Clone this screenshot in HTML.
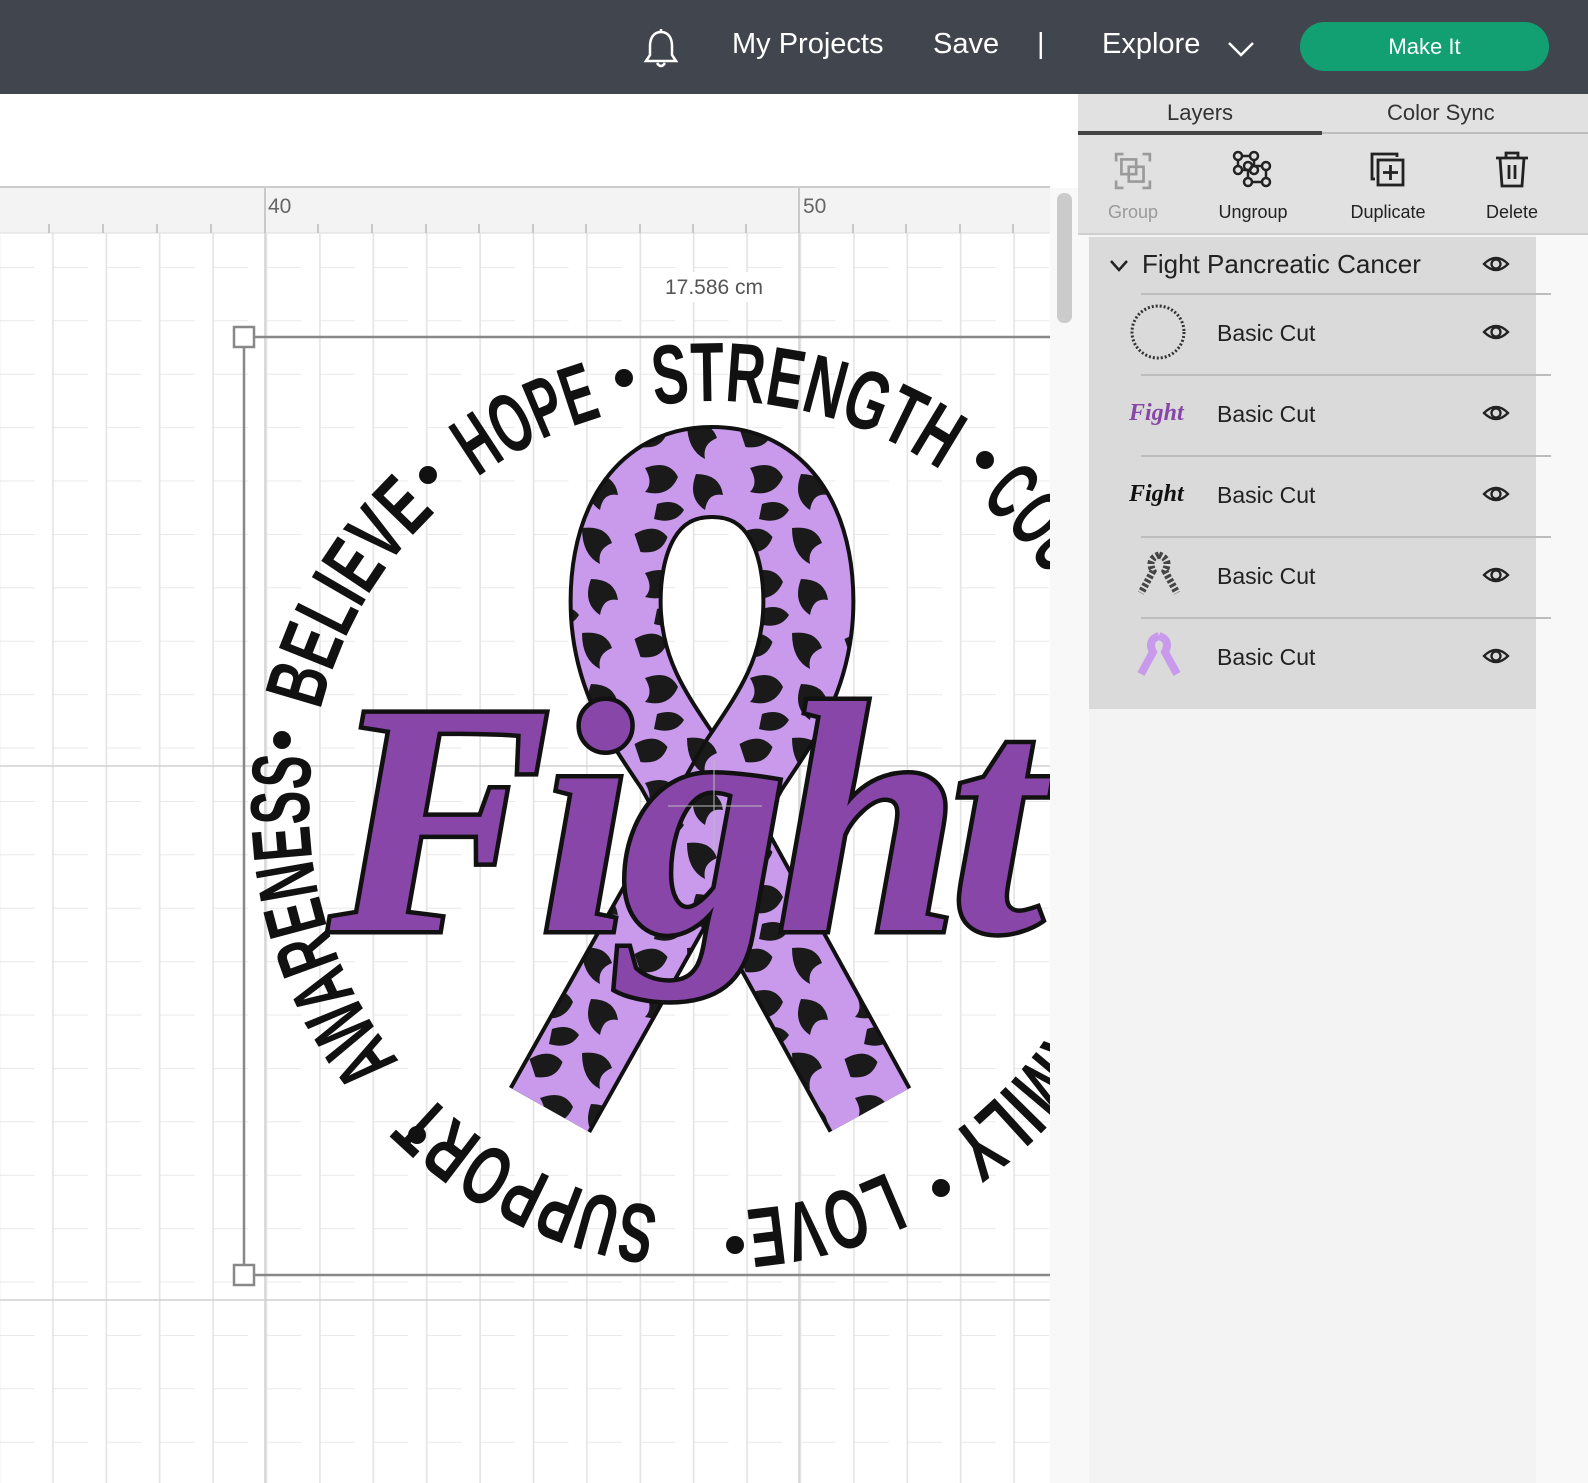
<!DOCTYPE html>
<html><head><meta charset="utf-8"><style>
*{margin:0;padding:0;box-sizing:border-box}
body{width:1588px;height:1483px;overflow:hidden;font-family:"Liberation Sans",sans-serif;background:#fff;position:relative}
.top{position:absolute;left:0;top:0;width:1588px;height:94px;background:#41464e;color:#fff}
.top span{position:absolute;top:28px;font-size:29px}
.btn{position:absolute;left:1300px;top:22px;width:249px;height:49px;border-radius:25px;background:#12a073;color:#fff;font-size:22px;text-align:center;line-height:49px}
.panel{position:absolute;left:1078px;top:94px;width:510px;height:1389px;background:#f8f8f8}
.tabs{position:absolute;left:0;top:0;width:510px;height:141px;background:#e1e1e1;border-bottom:2px solid #cfcfcf}
.tab{position:absolute;top:6px;font-size:22px;color:#333}
.tool{position:absolute;top:108px;font-size:18px;color:#222;text-align:center;width:120px}
.list{position:absolute;left:11px;top:143px;width:447px;height:472px;background:#dadada}
.rowl{position:absolute;left:52px;width:410px;border-top:2px solid #bdbdbd}
.lbl{position:absolute;left:128px;font-size:23px;color:#222}
</style></head><body>
<div class="top">
<svg style="position:absolute;left:643px;top:28px" width="36" height="42" viewBox="0 0 36 42"><path d="M18 4 C10 4 7 11 7 18 L7 27 L3 33 L33 33 L29 27 L29 18 C29 11 26 4 18 4 Z M18 1 L18 4 M14 35 Q18 41 22 35" fill="none" stroke="#fff" stroke-width="2.5"/></svg>
<span style="left:732px">My Projects</span>
<span style="left:933px">Save</span>
<span style="left:1037px">|</span>
<span style="left:1102px">Explore</span>
<svg style="position:absolute;left:1227px;top:40px" width="28" height="18"><path d="M2 3 L14 15 L26 3" fill="none" stroke="#fff" stroke-width="2.5"/></svg>
<div class="btn">Make It</div>
</div>

<svg style="position:absolute;left:0;top:94px" width="1050" height="1389">
<defs>
<pattern id="g" x="-19" y="-94" width="53.4" height="53.4" patternUnits="userSpaceOnUse"><path d="M0 0 H53.4 M0 0 V53.4" stroke="#e2e2e2" stroke-width="1.5" fill="none" transform="translate(18.5,0)"/></pattern>
<pattern id="leo" width="70" height="70" patternUnits="userSpaceOnUse" patternTransform="scale(1.5)">
<rect width="70" height="70" fill="#c99aec"/>
<path d="M3 6 q14 -8 22 2 q-4 12 -18 10 z" fill="#1a1a1a"/>
<path d="M38 2 q16 -2 20 10 q-10 4 -8 14 q-12 -6 -12 -24z" fill="#1a1a1a"/>
<path d="M10 32 q16 -6 22 6 q-6 14 -22 10 q6 -6 0 -16z" fill="#1a1a1a"/>
<path d="M44 36 q16 0 18 14 q-10 -2 -12 10 q-12 -8 -6 -24z" fill="#1a1a1a"/>
<path d="M18 56 q12 -4 18 4 q-6 10 -20 6z" fill="#1a1a1a"/>
</pattern>
<path id="c" d="M408.3,1071.7 A405,405 0 0 1 1019.7,540.3 A405,405 0 0 1 408.3,1071.7"/>
</defs>
<rect width="1050" height="1389" fill="#fff"/>
<rect y="139" width="1050" height="1250" fill="url(#g)"/>
<line x1="265" y1="94" x2="265" y2="1389" stroke="#d0d0d0" stroke-width="1.5"/>
<line x1="799" y1="94" x2="799" y2="1389" stroke="#d0d0d0" stroke-width="1.5"/>
<line x1="0" y1="672" x2="1050" y2="672" stroke="#d0d0d0" stroke-width="1.5"/>
<line x1="0" y1="1206" x2="1050" y2="1206" stroke="#d0d0d0" stroke-width="1.5"/>
<rect y="93" width="1050" height="46" fill="#f3f3f3"/>
<line x1="0" y1="93" x2="1050" y2="93" stroke="#ccc" stroke-width="2"/>
<line x1="0" y1="139" x2="1050" y2="139" stroke="#ddd"/>
<g stroke="#bbb" stroke-width="1.5"><path d="M49 130V139M103 130V139M157 130V139M211 130V139M265 94V139M318 130V139M372 130V139M426 130V139M479 130V139M533 130V139M586 130V139M640 130V139M693 130V139M746 130V139M799 94V139M853 130V139M906 130V139M960 130V139M1013 130V139"/></g>
<text x="268" y="119" font-size="21" fill="#666">40</text>
<text x="803" y="119" font-size="21" fill="#666">50</text>
<rect x="652" y="178" width="122" height="30" fill="#fff"/>
<text x="714" y="200" font-size="21" fill="#555" text-anchor="middle">17.586 cm</text>
<g transform="translate(0,-94)">
<g stroke-linecap="butt" fill="none">
<path d="M712 472 C640 472 612 540 616 615 C620 680 650 720 680 765 L870 1110" stroke="#111" stroke-width="94"/>
<path d="M712 472 C640 472 612 540 616 615 C620 680 650 720 680 765 L870 1110" stroke="url(#leo)" stroke-width="86"/>
<path d="M712 472 C784 472 812 540 808 615 C804 680 774 720 744 765 L550 1110" stroke="#111" stroke-width="94"/>
<path d="M712 472 C784 472 812 540 808 615 C804 680 774 720 744 765 L550 1110" stroke="url(#leo)" stroke-width="86"/>
</g>
<text x="330" y="930" font-family="Liberation Serif" font-style="italic" font-weight="bold" font-size="330" fill="#8847a8" stroke="#111" stroke-width="9" paint-order="stroke" letter-spacing="-10">Fight</text>
<line x1="714" y1="760" x2="714" y2="850" stroke="#bbb"/><line x1="668" y1="806" x2="762" y2="806" stroke="#bbb"/>
<g font-family="'Liberation Sans Narrow','Liberation Sans',sans-serif" font-weight="bold" font-size="84" fill="#111">
<text><textPath href="#c" startOffset="14" textLength="325" lengthAdjust="spacingAndGlyphs">AWARENESS</textPath></text>
<text><textPath href="#c" startOffset="386" textLength="233" lengthAdjust="spacingAndGlyphs">BELIEVE</textPath></text>
<text><textPath href="#c" startOffset="673" textLength="140" lengthAdjust="spacingAndGlyphs">HOPE</textPath></text>
<text><textPath href="#c" startOffset="866" textLength="300" lengthAdjust="spacingAndGlyphs">STRENGTH</textPath></text>
<text><textPath href="#c" startOffset="1215" textLength="240" lengthAdjust="spacingAndGlyphs">COURAGE</textPath></text>
<text><textPath href="#c" startOffset="1530" textLength="170" lengthAdjust="spacingAndGlyphs">FAITH</textPath></text>
<text><textPath href="#c" startOffset="1750" textLength="200" lengthAdjust="spacingAndGlyphs">FAMILY</textPath></text>
<text><textPath href="#c" startOffset="2018" textLength="148" lengthAdjust="spacingAndGlyphs">LOVE</textPath></text>
<text><textPath href="#c" startOffset="2252" textLength="262" lengthAdjust="spacingAndGlyphs">SUPPORT</textPath></text>
</g>
<g fill="#111">
<circle cx="282" cy="740" r="9"/><circle cx="428" cy="475" r="9"/><circle cx="624" cy="378" r="9"/>
<circle cx="985" cy="460" r="9"/><circle cx="941" cy="1188" r="9"/><circle cx="735" cy="1245" r="9"/><circle cx="417" cy="1135" r="9"/>
</g>
<path d="M244 337 H1050 M244 1275 H1050 M244 337 V1275" stroke="#888" stroke-width="2.5" fill="none"/>
<rect x="234" y="327" width="20" height="20" fill="#fff" stroke="#888" stroke-width="2.5"/>
<rect x="234" y="1265" width="20" height="20" fill="#fff" stroke="#888" stroke-width="2.5"/>
</g>
</svg>
<div style="position:absolute;left:1050px;top:188px;width:28px;height:1295px;background:#f8f8f8"></div>
<div style="position:absolute;left:1057px;top:193px;width:15px;height:130px;border-radius:7px;background:#cbcbcb"></div>

<div class="panel">
<div style="position:absolute;left:11px;top:141px;width:447px;height:1248px;background:#f3f3f3"></div>
<div class="tabs">
<div class="tab" style="left:89px">Layers</div>
<div class="tab" style="left:309px">Color Sync</div>
<div style="position:absolute;left:0;top:38px;width:510px;height:2px;background:#bdbdbd"></div>
<div style="position:absolute;left:0;top:37px;width:244px;height:4px;background:#444"></div>
<svg style="position:absolute;left:36px;top:58px" width="38" height="38" viewBox="0 0 36 36" fill="none" stroke="#9a9a9a" stroke-width="2.5"><path d="M2 9V2H9M27 2H34V9M34 27V34H27M9 34H2V27"/><rect x="7" y="7" width="14" height="14"/><rect x="14" y="14" width="14" height="14"/></svg>
<div class="tool" style="left:-5px;color:#9a9a9a">Group</div>
<svg style="position:absolute;left:154px;top:56px" width="40" height="40" viewBox="0 0 40 40" fill="none" stroke="#222" stroke-width="2.5"><circle cx="6" cy="6" r="4"/><circle cx="22" cy="6" r="4"/><circle cx="6" cy="20" r="4"/><circle cx="22" cy="20" r="4"/><circle cx="16" cy="16" r="4"/><circle cx="34" cy="16" r="4"/><circle cx="16" cy="32" r="4"/><circle cx="34" cy="32" r="4"/><path d="M10 6H18M6 10V16M10 20H18M22 10V16M20 16H30M16 20V28M20 32H30M34 20V28"/></svg>
<div class="tool" style="left:115px">Ungroup</div>
<svg style="position:absolute;left:291px;top:57px" width="38" height="38" viewBox="0 0 38 38" fill="none" stroke="#222" stroke-width="2.8"><path d="M6 28H3V3H28V6"/><rect x="9" y="9" width="25" height="25"/><path d="M21.5 14V29M14 21.5H29"/></svg>
<div class="tool" style="left:250px">Duplicate</div>
<svg style="position:absolute;left:416px;top:57px" width="36" height="38" viewBox="0 0 36 38" fill="none" stroke="#222" stroke-width="2.8"><path d="M2 7H34M12 7V2H24V7M6 7L8 35H28L30 7M15 14V28M21 14V28"/></svg>
<div class="tool" style="left:374px">Delete</div>
</div>
<div class="list">
<svg style="position:absolute;left:20px;top:22px" width="20" height="14"><path d="M2 2L10 11L18 2" fill="none" stroke="#222" stroke-width="2.5"/></svg>
<div class="lbl" style="left:53px;top:12px;font-size:26px">Fight Pancreatic Cancer</div>
<div class="rowl" style="top:56px"></div><div class="rowl" style="top:137px"></div><div class="rowl" style="top:218px"></div><div class="rowl" style="top:299px"></div><div class="rowl" style="top:380px"></div>
<div class="lbl" style="top:83px">Basic Cut</div>
<div class="lbl" style="top:164px">Basic Cut</div>
<div class="lbl" style="top:245px">Basic Cut</div>
<div class="lbl" style="top:326px">Basic Cut</div>
<div class="lbl" style="top:407px">Basic Cut</div>
<svg style="position:absolute;left:0;top:0" width="447" height="472">
<g fill="none" stroke="#222" stroke-width="2.3"><path d="M395 27 Q407 15 419 27 Q407 39 395 27Z"/><circle cx="407" cy="27" r="4.5"/></g>
<g fill="none" stroke="#222" stroke-width="2.3" transform="translate(0,68)"><path d="M395 27 Q407 15 419 27 Q407 39 395 27Z"/><circle cx="407" cy="27" r="4.5"/></g>
<g fill="none" stroke="#222" stroke-width="2.3" transform="translate(0,149)"><path d="M395 27 Q407 15 419 27 Q407 39 395 27Z"/><circle cx="407" cy="27" r="4.5"/></g>
<g fill="none" stroke="#222" stroke-width="2.3" transform="translate(0,230)"><path d="M395 27 Q407 15 419 27 Q407 39 395 27Z"/><circle cx="407" cy="27" r="4.5"/></g>
<g fill="none" stroke="#222" stroke-width="2.3" transform="translate(0,311)"><path d="M395 27 Q407 15 419 27 Q407 39 395 27Z"/><circle cx="407" cy="27" r="4.5"/></g>
<g fill="none" stroke="#222" stroke-width="2.3" transform="translate(0,392)"><path d="M395 27 Q407 15 419 27 Q407 39 395 27Z"/><circle cx="407" cy="27" r="4.5"/></g>
<circle cx="69" cy="95" r="26" fill="none" stroke="#333" stroke-width="3" stroke-dasharray="2 2"/>
<text x="40" y="183" font-family="Liberation Serif" font-style="italic" font-weight="bold" font-size="24" fill="#8847a8">Fight</text>
<text x="40" y="264" font-family="Liberation Serif" font-style="italic" font-weight="bold" font-size="24" fill="#111">Fight</text>
<g stroke="#444" stroke-width="7" fill="none" stroke-dasharray="3 2"><path d="M70 318 q-12 4 -6 16 l-12 22 M70 318 q12 4 6 16 l12 22"/></g>
<g stroke="#c99aec" stroke-width="8" fill="none"><path d="M70 399 q-12 4 -6 16 l-12 22 M70 399 q12 4 6 16 l12 22"/></g>
</svg>
</div>
</div>
</body></html>
